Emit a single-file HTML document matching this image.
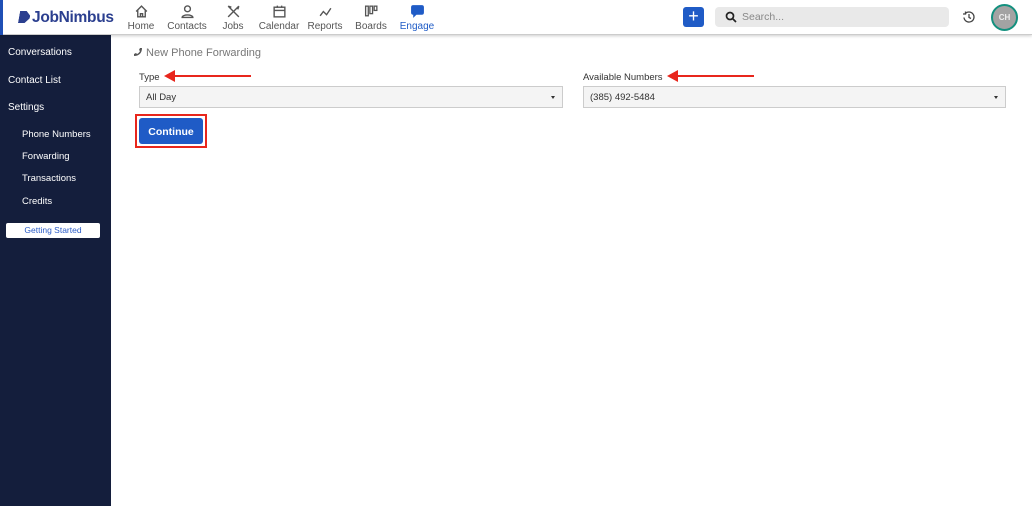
<!DOCTYPE html>
<html><head><style>
*{margin:0;padding:0;box-sizing:border-box}
body{width:1032px;height:506px;background:#fff;font-family:"Liberation Sans",sans-serif;position:relative;overflow:hidden}
.hdr{position:absolute;left:0;top:0;width:1032px;height:35px;background:#fff;border-bottom:1px solid #ccc;box-shadow:0 1px 3px rgba(0,0,0,.2);z-index:2}
.hdr .edge{position:absolute;left:0;top:0;width:3px;height:35px;background:#1f4fb5}
.logo{position:absolute;left:19px;top:9px;font-weight:bold;font-size:15.5px;color:#2b3f8f;letter-spacing:-0.3px}
.logo i{display:inline-block;width:11px;height:12px;background:#2b3f8f;clip-path:polygon(0 0,60% 0,100% 40%,100% 60%,60% 100%,0 100%);vertical-align:-1px;margin-right:2px;transform:skewX(-10deg)}
.nav{position:absolute;top:4px;font-size:10px;color:#555;text-align:center;width:50px}
.nav svg{display:block;margin:0 auto 2px;width:15px;height:15px}
.side{position:absolute;left:0;top:35px;width:111px;height:471px;background:#141e3c;color:#fff;font-size:10px}
.side div{position:absolute}
.gs{left:6px;top:188px;width:94px;height:15px;background:#fff;color:#2a5bc7;border-radius:2px;font-size:8.5px;text-align:center;line-height:15px}
.lbl{position:absolute;font-size:9.5px;color:#333}
.sel{position:absolute;height:22px;background:#f4f4f4;border:1px solid #ccc;font-size:9.5px;color:#333;padding-left:6px;display:flex;align-items:center}
.sel:after{content:"";position:absolute;right:7px;top:9px;border:2px solid transparent;border-top:3px solid #333}
.arrow{position:absolute;height:2px;background:#e8261c}
.arrow:before{content:"";position:absolute;left:-10px;top:-5px;border-right:11px solid #e8261c;border-top:6px solid transparent;border-bottom:6px solid transparent}
</style></head><body>
<div class="hdr"><div class="edge"></div>
<div class="logo"><i></i>JobNimbus</div>
<div class="nav" style="left:116px"><svg viewBox="0 0 14 14" fill="none" stroke="#555" stroke-width="1.3"><path d="M2 7L7 2l5 5M3.5 6v6h7V6M6 12V9h2v3"/></svg>Home</div>
<div class="nav" style="left:162px"><svg viewBox="0 0 14 14" fill="none" stroke="#555" stroke-width="1.3"><circle cx="7" cy="4.5" r="2.7"/><path d="M2 12.5c0-3 10-3 10 0z"/></svg>Contacts</div>
<div class="nav" style="left:208px"><svg viewBox="0 0 14 14" fill="none" stroke="#555" stroke-width="1.3"><path d="M2 2l10 10M12 2L2 12M2 2l3 1M12 2l-1 3"/></svg>Jobs</div>
<div class="nav" style="left:254px"><svg viewBox="0 0 14 14" fill="none" stroke="#555" stroke-width="1.3"><rect x="2" y="3" width="10" height="9"/><path d="M2 6h10M5 1.5v2M9 1.5v2"/></svg>Calendar</div>
<div class="nav" style="left:300px"><svg viewBox="0 0 14 14" fill="none" stroke="#555" stroke-width="1.3"><path d="M2 11l3-4 3 3 4-6"/></svg>Reports</div>
<div class="nav" style="left:346px"><svg viewBox="0 0 14 14" fill="none" stroke="#555" stroke-width="1.2"><rect x="1.5" y="2" width="2.5" height="9"/><rect x="5.5" y="2" width="2.5" height="7"/><rect x="9.5" y="2" width="2.5" height="4"/></svg>Boards</div>
<div class="nav" style="left:392px;color:#1f5bc6"><svg viewBox="0 0 14 14"><path d="M1 3q0-2 2-2h8q2 0 2 2v5q0 2-2 2H6l-3 3v-3q-2 0-2-2z" fill="#1f5bc6"/></svg>Engage</div>
<div style="position:absolute;left:683px;top:7px;width:21px;height:20px;background:#1f5bc6;border-radius:3px;color:#fff;font-size:18px;line-height:19px;text-align:center">+</div>
<div style="position:absolute;left:715px;top:7px;width:234px;height:20px;background:#e9e9e9;border-radius:4px;font-size:10.5px;color:#888;line-height:20px;padding-left:27px">Search...
<svg style="position:absolute;left:10px;top:4px" width="12" height="12" viewBox="0 0 12 12" fill="none" stroke="#222" stroke-width="1.7"><circle cx="5" cy="5" r="3.5"/><path d="M7.5 7.5L11 11"/></svg></div>
<svg style="position:absolute;left:962px;top:10px" width="14" height="14" viewBox="0 0 14 14" fill="none" stroke="#444" stroke-width="1.3"><path d="M3 4A5 5 0 1 1 2 7.5"/><path d="M1 4h2.5V1.5"/><path d="M7 4v3.5l2 1"/></svg>
<div style="position:absolute;left:991px;top:4px;width:27px;height:27px;border-radius:50%;background:#a3a3a3;border:2px solid #13907e;color:#eee;font-size:8px;font-weight:bold;text-align:center;line-height:23px">CH</div>
</div>
<div class="side">
<div style="left:8px;top:12px">Conversations</div>
<div style="left:8px;top:40px">Contact List</div>
<div style="left:8px;top:67px">Settings</div>
<div style="left:22px;top:94px;font-size:9.5px">Phone Numbers</div>
<div style="left:22px;top:116px;font-size:9.5px">Forwarding</div>
<div style="left:22px;top:138px;font-size:9.5px">Transactions</div>
<div style="left:22px;top:161px;font-size:9.5px">Credits</div>
<div class="gs">Getting Started</div>
</div>
<div style="position:absolute;left:133px;top:47px;font-size:11px;color:#777">
<svg width="10" height="10" viewBox="0 0 10 10" style="vertical-align:-1px"><path d="M9 1C9 6 6 9 1 9L1 7L3 6L4 7C5.5 6.3 6.3 5.5 7 4L6 3L7 1Z" fill="#555"/></svg> New Phone Forwarding</div>
<div class="lbl" style="left:139px;top:72px">Type</div>
<div class="arrow" style="left:174px;top:75px;width:77px"></div>
<div class="sel" style="left:139px;top:86px;width:424px">All Day</div>
<div class="lbl" style="left:583px;top:72px">Available Numbers</div>
<div class="arrow" style="left:677px;top:75px;width:77px"></div>
<div class="sel" style="left:583px;top:86px;width:423px">(385) 492-5484</div>
<div style="position:absolute;left:135px;top:114px;width:72px;height:34px;border:2px solid #e8261c"></div>
<div style="position:absolute;left:139px;top:118px;width:64px;height:26px;background:#1f5bc6;border-radius:3px;color:#fff;font-weight:bold;font-size:10.5px;display:flex;align-items:center;justify-content:center;padding-top:1px">Continue</div>
</body></html>
